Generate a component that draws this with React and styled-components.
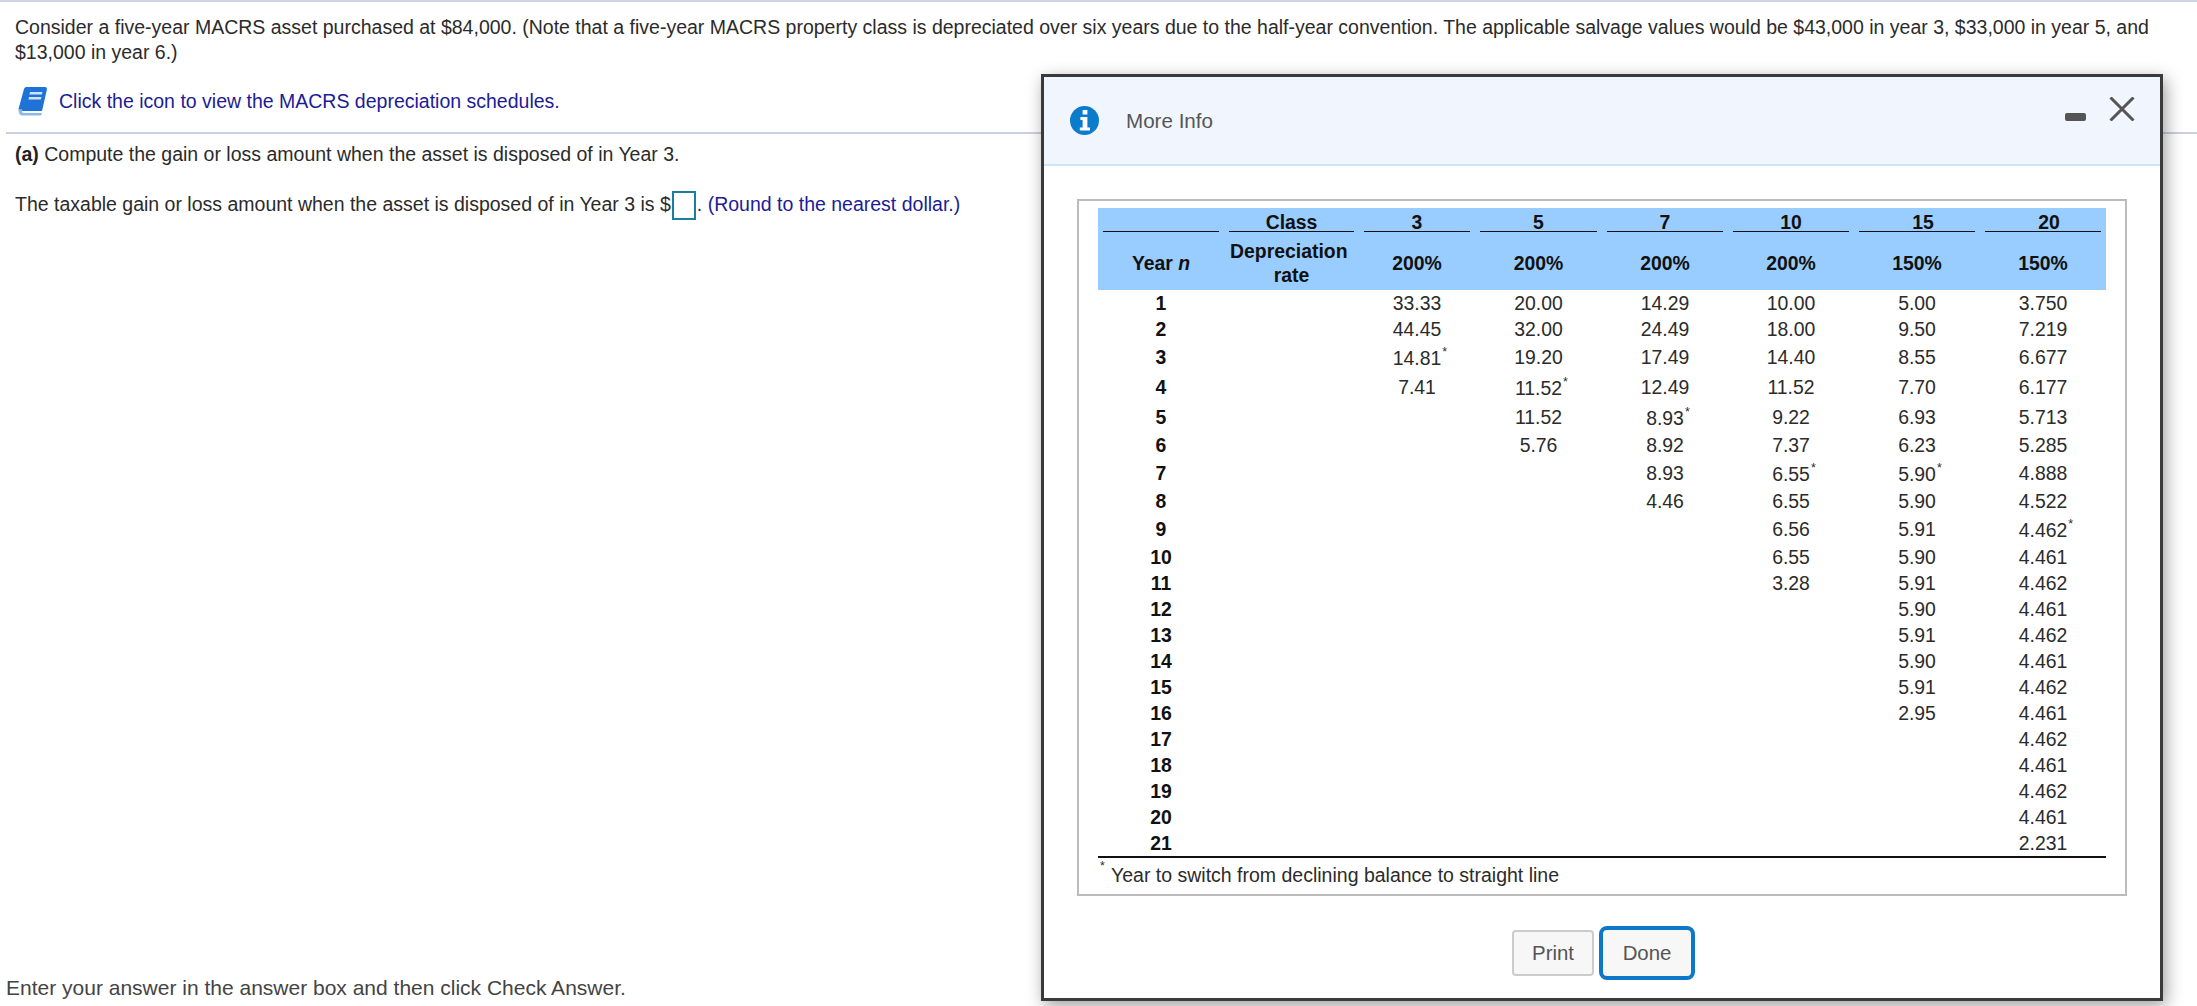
import React from "react";
import styled, { createGlobalStyle } from "styled-components";

const Global = createGlobalStyle`
  html, body { margin: 0; padding: 0; background: #fff; }
  body { font-family: "Liberation Sans", Arial, sans-serif; color: #2b2b2b; }
`;

const Page = styled.div`
  position: relative;
  width: 2197px;
  height: 1006px;
  box-sizing: border-box;
  overflow: hidden;
  display: flex;
  flex-direction: column;
  border-top: 2px solid #cdd3e0;
  font-size: 19.5px;
  line-height: 25px;
`;
const Intro = styled.p`
  margin: 13px 0 0;
  padding: 0 0 0 15px;
  width: 2170px;
  box-sizing: border-box;
`;
const LinkRow = styled.div`
  display: flex;
  align-items: center;
  gap: 11px;
  margin-top: 22px;
  padding-left: 18px;
  height: 29px;
  color: #1c1c96;
`;
const Separator = styled.hr`
  margin: 16px 0 0 6px;
  border: 0;
  height: 2px;
  background: #cbd0de;
`;
const Part = styled.p`
  margin: 8px 0 0;
  padding-left: 15px;
  b { color: #222; }
`;
const Question = styled.p`
  margin: 24px 0 0;
  padding-left: 15px;
`;
const AnswerBox = styled.span`
  display: inline-block;
  width: 24px;
  height: 29px;
  box-sizing: border-box;
  margin: 0 1px 0 1px;
  border: 2px solid #1a7e9f;
  vertical-align: middle;
`;
const Hint = styled.span`
  color: #1c1c96;
`;
const Instruction = styled.div`
  margin-top: auto;
  padding: 0 0 6px 6px;
  font-size: 21px;
  color: #444;
`;

const Modal = styled.section`
  position: absolute;
  left: 1041px;
  top: 72px;
  width: 1122px;
  height: 927px;
  box-sizing: border-box;
  border: 3px solid #3a3a3a;
  background: #fff;
  box-shadow: 3px 5px 16px rgba(0, 0, 0, 0.38);
  display: flex;
  flex-direction: column;
`;
const ModalHeader = styled.header`
  display: flex;
  height: 87px;
  flex: none;
  align-items: center;
  gap: 27px;
  padding: 0 25px 0 26px;
  background: #f1f6fe;
  border-bottom: 2px solid #cce4fa;
`;
const Title = styled.span`
  flex: 1;
  font-size: 20.6px;
  color: #555;
`;
const Controls = styled.div`
  align-self: flex-start;
  display: flex;
  align-items: flex-end;
  gap: 23px;
  margin-top: 20px;
`;
const Minimize = styled.span`
  display: block;
  width: 21px;
  height: 8px;
  border-radius: 2px;
  background: #555;
`;
const ModalBody = styled.div`
  padding: 33px 33px 0;
`;
const Frame = styled.div`
  box-sizing: border-box;
  height: 697px;
  border: 2px solid #bbb;
  padding: 7px 19px 0;
`;
const Table = styled.table`
  width: 1008px;
  border-collapse: collapse;
  table-layout: fixed;
  font-size: 19.4px;
`;
const Col = styled.col`
  width: ${(p) => p.$w}px;
`;
const ClassRow = styled.tr`
  height: 28px;
  background: #99ccff;
`;
const RateRow = styled.tr`
  height: 54px;
  background: #99ccff;
`;
const ClassCell = styled.th`
  padding: 0;
  vertical-align: top;
  font-weight: 700;
  color: #111;
`;
const ClassLabel = styled.span`
  display: block;
  margin: 0 5px;
  padding: 2px 0 0 ${(p) => p.$indent || 0}px;
  height: 21px;
  line-height: 24px;
  border-bottom: 1px solid #111;
`;
const RateCell = styled.th`
  padding: 0;
  font-weight: 700;
  line-height: 24px;
  color: #111;
`;
const BodyRow = styled.tr`
  height: ${(p) => p.$h}px;
`;
const YearCell = styled.td`
  padding: 0;
  text-align: center;
  font-weight: 700;
  line-height: 20px;
  color: #111;
`;
const ValueCell = styled.td`
  padding: 0;
  text-align: center;
  line-height: 20px;
  color: #2b2b2b;
`;
const Starred = styled.span`
  position: relative;
  display: inline-block;
  padding-top: 3px;
`;
const Star = styled.span`
  position: absolute;
  left: 100%;
  top: 0;
  margin-left: 1px;
  font-size: 12.5px;
  line-height: 14px;
`;
const Footnote = styled.div`
  box-sizing: border-box;
  height: 38px;
  display: flex;
  align-items: center;
  border-top: 2px solid #111;
  padding: 0 0 2px 2px;
`;
const FootStar = styled.span`
  align-self: flex-start;
  width: 11px;
  font-size: 12.5px;
  line-height: 14px;
  margin-top: 1px;
`;
const ModalFooter = styled.div`
  display: flex;
  align-items: center;
  justify-content: center;
  gap: 5px;
  padding: 30px 0 0 3px;
`;
const Button = styled.button`
  box-sizing: border-box;
  width: ${(p) => (p.$primary ? 96 : 82)}px;
  height: ${(p) => (p.$primary ? 54 : 46)}px;
  padding: 0;
  background: #f7f7f7;
  border: ${(p) => (p.$primary ? "4px solid #0d78c8" : "2px solid #ccc")};
  border-radius: ${(p) => (p.$primary ? 8 : 4)}px;
  font: 20.4px "Liberation Sans", Arial, sans-serif;
  color: #555;
`;

const BookIcon = () => (
  <svg width="30" height="29" viewBox="0 0 30 29" aria-hidden="true">
    <path d="M8 0H27a2 2 0 0 1 2 2L24 24H3L0.5 22 6 2a2.5 2.5 0 0 1 2-2Z" fill="#1f73d8" />
    <path d="M0.5 22c0 4 1 6 3 6.5H23l1-2.5H6c-2 0-2.5-2-1.5-3.5Z" fill="#8cb9ec" />
    <path d="M12 5H24.5L23.8 7.5H11.4ZM11 10H23.5L22.8 12.5H10.4Z" fill="#cfe3fa" />
  </svg>
);
const InfoIcon = () => (
  <svg width="29" height="29" viewBox="0 0 29 29" aria-hidden="true" style={{ flex: "none" }}>
    <circle cx="14.5" cy="14.5" r="14.5" fill="#0b7bcb" />
    <path d="M12.6 4h4.8v4.4h-4.8ZM10.4 11h7v10.6H20v2.9H9.8v-2.9h2.8v-7.7h-2.2Z" fill="#fff" />
  </svg>
);
const CloseIcon = () => (
  <svg width="26" height="24" viewBox="0 0 26 24" aria-hidden="true">
    <path d="M1.5 0.5 24.5 23.5M24.5 0.5 1.5 23.5" stroke="#555" strokeWidth="3" fill="none" />
  </svg>
);

const widths = [126, 135, 116, 127, 126, 126, 126, 126];
const classes = [
  { label: "" },
  { label: "Class" },
  { label: "3" },
  { label: "5" },
  { label: "7" },
  { label: "10" },
  { label: "15", indent: 12 },
  { label: "20", indent: 12 },
];
const rates = ["200%", "200%", "200%", "200%", "150%", "150%"];
const heights = [26, 26, 29, 31, 29, 27, 29, 27, 29, 27, 26, 26, 26, 26, 26, 26, 26, 26, 26, 26, 26];
const columns = [
  ["33.33", "44.45", "14.81*", "7.41"],
  ["20.00", "32.00", "19.20", "11.52*", "11.52", "5.76"],
  ["14.29", "24.49", "17.49", "12.49", "8.93*", "8.92", "8.93", "4.46"],
  ["10.00", "18.00", "14.40", "11.52", "9.22", "7.37", "6.55*", "6.55", "6.56", "6.55", "3.28"],
  ["5.00", "9.50", "8.55", "7.70", "6.93", "6.23", "5.90*", "5.90", "5.91", "5.90", "5.91", "5.90", "5.91", "5.90", "5.91", "2.95"],
  ["3.750", "7.219", "6.677", "6.177", "5.713", "5.285", "4.888", "4.522", "4.462*", "4.461", "4.462", "4.461", "4.462", "4.461", "4.462", "4.461", "4.462", "4.461", "4.462", "4.461", "2.231"],
];

const Value = ({ text }) => {
  if (!text) return null;
  if (text.endsWith("*")) {
    return (
      <Starred>
        {text.slice(0, -1)}
        <Star>*</Star>
      </Starred>
    );
  }
  return text;
};

export default function App() {
  return (
    <Page>
      <Global />
      <Intro>
        Consider a five-year MACRS asset purchased at $84,000. (Note that a five-year MACRS property class is depreciated over six years due to the half-year convention. The applicable salvage values would be $43,000 in year 3, $33,000 in year 5, and $13,000 in year 6.)
      </Intro>
      <LinkRow>
        <BookIcon />
        <span>Click the icon to view the MACRS depreciation schedules.</span>
      </LinkRow>
      <Separator />
      <Part>
        <b>(a)</b> Compute the gain or loss amount when the asset is disposed of in Year 3.
      </Part>
      <Question>
        The taxable gain or loss amount when the asset is disposed of in Year 3 is $<AnswerBox />. <Hint>(Round to the nearest dollar.)</Hint>
      </Question>
      <Instruction>Enter your answer in the answer box and then click Check Answer.</Instruction>

      <Modal>
        <ModalHeader>
          <InfoIcon />
          <Title>More Info</Title>
          <Controls>
            <Minimize />
            <CloseIcon />
          </Controls>
        </ModalHeader>
        <ModalBody>
          <Frame>
            <Table>
              <colgroup>
                {widths.map((w, i) => (
                  <Col key={i} $w={w} />
                ))}
              </colgroup>
              <thead>
                <ClassRow>
                  {classes.map((c, i) => (
                    <ClassCell key={i}>
                      <ClassLabel $indent={c.indent}>{c.label}</ClassLabel>
                    </ClassCell>
                  ))}
                </ClassRow>
                <RateRow>
                  <RateCell>
                    Year <i>n</i>
                  </RateCell>
                  <RateCell>
                    Depreciation&nbsp;
                    <br />
                    rate
                  </RateCell>
                  {rates.map((r, i) => (
                    <RateCell key={i}>{r}</RateCell>
                  ))}
                </RateRow>
              </thead>
              <tbody>
                {heights.map((h, row) => (
                  <BodyRow key={row} $h={h}>
                    <YearCell>{row + 1}</YearCell>
                    <ValueCell />
                    {columns.map((col, c) => (
                      <ValueCell key={c}>
                        <Value text={col[row]} />
                      </ValueCell>
                    ))}
                  </BodyRow>
                ))}
              </tbody>
            </Table>
            <Footnote>
              <FootStar>*</FootStar>
              <span>Year to switch from declining balance to straight line</span>
            </Footnote>
          </Frame>
          <ModalFooter>
            <Button>Print</Button>
            <Button $primary>Done</Button>
          </ModalFooter>
        </ModalBody>
      </Modal>
    </Page>
  );
}
